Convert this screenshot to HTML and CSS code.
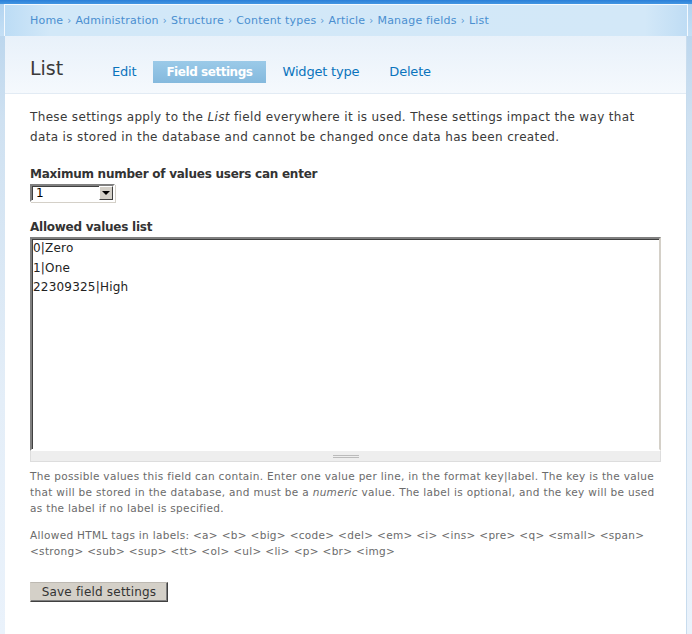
FILE: index.html
```html
<!DOCTYPE html>
<html>
<head>
<meta charset="utf-8">
<title>List</title>
<link rel="stylesheet" href="styles.css">
</head>
<body>
<div class="topbar"></div>
<div class="crumbs-wrap">
  <div class="crumbs">
    <a href="#">Home</a><span class="sep">›</span><a href="#">Administration</a><span class="sep">›</span><a href="#">Structure</a><span class="sep">›</span><a href="#">Content types</a><span class="sep">›</span><a href="#">Article</a><span class="sep">›</span><a href="#">Manage fields</a><span class="sep">›</span><a href="#">List</a>
  </div>
</div>
<div class="page">
  <div class="page-head">
    <h1 class="title">List</h1>
    <ul class="tabs">
      <li><a href="#">Edit</a></li>
      <li class="active"><a href="#">Field settings</a></li>
      <li><a href="#">Widget type</a></li>
      <li><a href="#">Delete</a></li>
    </ul>
  </div>
  <div class="content">
    <p class="intro">These settings apply to the <em>List</em> field everywhere it is used. These settings impact the way that data is stored in the database and cannot be changed once data has been created.</p>
    <div class="form-item">
      <label class="label">Maximum number of values users can enter</label>
      <div class="select"><span class="select-val">1</span><span class="select-btn"><span class="arrow"></span></span></div>
    </div>
    <div class="form-item">
      <label class="label">Allowed values list</label>
      <div class="textarea-wrap">
        <textarea class="textarea" rows="10">0|Zero
1|One
22309325|High</textarea>
        <div class="grip"><span class="grip-lines"></span></div>
      </div>
      <div class="desc">The possible values this field can contain. Enter one value per line, in the format key|label. The key is the value that will be stored in the database, and must be a <em>numeric</em> value. The label is optional, and the key will be used as the label if no label is specified.</div>
      <div class="desc desc2">Allowed HTML tags in labels: &lt;a&gt; &lt;b&gt; &lt;big&gt; &lt;code&gt; &lt;del&gt; &lt;em&gt; &lt;i&gt; &lt;ins&gt; &lt;pre&gt; &lt;q&gt; &lt;small&gt; &lt;span&gt; &lt;strong&gt; &lt;sub&gt; &lt;sup&gt; &lt;tt&gt; &lt;ol&gt; &lt;ul&gt; &lt;li&gt; &lt;p&gt; &lt;br&gt; &lt;img&gt;</div>
    </div>
    <div class="actions">
      <button class="button" type="button">Save field settings</button>
    </div>
  </div>
</div>
</body>
</html>
```

FILE: styles.css
```css
html, body {
  margin: 0;
  padding: 0;
}
body {
  font-family: "DejaVu Sans", Verdana, sans-serif;
  color: #333;
  background: linear-gradient(to bottom, #b4d2ec 0px, #cfe1f1 120px, #e4eef8 400px, #eaf2fb 634px);
  height: 634px;
  overflow: hidden;
}
.topbar {
  height: 4px;
  background: linear-gradient(to bottom, #2a7fd8, #4396e2);
}
.crumbs-wrap {
  background: linear-gradient(to bottom, #b3d4f0, #c4dff5);
  padding: 0 4px;
}
.crumbs {
  height: 31px;
  border: 1px solid #f4f9fe;
  border-bottom: 0;
  background: linear-gradient(to right, #bcdcf5 0px, #d2e8f8 45px, #d3e8f8 640px, #bedcf4 684px);
  padding-left: 25px;
  font-size: 11px;
  line-height: 32px;
  color: #4a8fd0;
  letter-spacing: 0.2px;
}
.crumbs a {
  color: #4a8fd0;
  text-decoration: none;
}
.crumbs .sep {
  display: inline-block;
  margin: 0 4px;
  font-size: 10px;
  color: #5a98d2;
}
.page {
  margin: 0 5px 0 5px;
  background: #fff;
  height: 598px;
  border-right: 1px solid #c8dcee;
}
.page-head {
  display: flex;
  align-items: center;
  height: 57px;
  padding-left: 25px;
  background: linear-gradient(to bottom, #e8f1fa, #f5f9fd);
  border-bottom: 1px solid #e2ebf4;
}
.title {
  margin: 0;
  width: 69px;
  font-size: 19px;
  font-weight: normal;
  color: #3a3a3a;
  position: relative;
  top: 3px;
}
.tabs {
  display: flex;
  list-style: none;
  margin: 0;
  padding: 0;
  gap: 4px;
  position: relative;
  top: 7px;
}
.tabs li a {
  display: block;
  padding: 0 13px;
  height: 22px;
  line-height: 22px;
  font-size: 13px;
  color: #0a74bd;
  text-decoration: none;
  letter-spacing: -0.2px;
}
.tabs li.active a {
  background: linear-gradient(to bottom, #9bcae8, #84b9dd);
  color: #fff;
  font-weight: bold;
  font-size: 12px;
  letter-spacing: -0.45px;
}
.content {
  padding: 13px 26px 0 25px;
}
.intro {
  margin: 0;
  font-size: 12px;
  line-height: 20px;
  color: #3a3a3a;
  letter-spacing: 0.35px;
}
.form-item {
  margin-top: 19px;
}
.label {
  display: block;
  font-size: 12px;
  font-weight: bold;
  line-height: 16px;
  color: #333;
  margin-bottom: 2px;
  letter-spacing: -0.25px;
}
.select {
  display: flex;
  width: 85px;
  height: 18px;
  box-sizing: border-box;
  border: 2px solid;
  border-color: #808080 #ffffff #ffffff #808080;
  box-shadow: inset 1px 1px 0 #404040, 1px 1px 0 #d4d0c8;
  background: #fff;
  align-items: center;
  justify-content: space-between;
}
.select-val {
  font-size: 12px;
  padding-left: 4px;
  color: #000;
  line-height: 14px;
}
.select-btn {
  width: 14px;
  height: 14px;
  box-sizing: border-box;
  background: #d4d0c8;
  border: 1px solid;
  border-color: #fff #404040 #404040 #fff;
  display: flex;
  align-items: center;
  justify-content: center;
}
.arrow {
  width: 0;
  height: 0;
  border-left: 4px solid transparent;
  border-right: 4px solid transparent;
  border-top: 4px solid #000;
}
.form-item + .form-item {
  margin-top: 17px;
}
.textarea-wrap {
  width: 631px;
}
.textarea {
  display: block;
  width: 631px;
  height: 214px;
  box-sizing: border-box;
  margin: 0;
  padding: 0 1px;
  border: 2px solid;
  border-color: #808080 #d4d0c8 #ffffff #808080;
  box-shadow: inset 1px 1px 0 #404040;
  font-family: "DejaVu Sans", Verdana, sans-serif;
  font-size: 12px;
  line-height: 19.5px;
  color: #222;
  letter-spacing: 0.2px;
  resize: none;
  outline: none;
  overflow: hidden;
}
.grip {
  height: 10px;
  background: #eeeeee;
  border: 1px solid #dddddd;
  border-top: 0;
  display: flex;
  justify-content: center;
  align-items: center;
}
.grip-lines {
  display: block;
  width: 26px;
  height: 3px;
  border-top: 1px solid #bbb;
  border-bottom: 1px solid #bbb;
  box-sizing: border-box;
}
.desc {
  margin-top: 6px;
  font-size: 10.5px;
  line-height: 16px;
  color: #6b6b6b;
  letter-spacing: 0.32px;
}
.desc2 {
  margin-top: 11px;
}
.actions {
  margin-top: 23px;
}
.button {
  display: block;
  margin: 0;
  width: 138px;
  height: 20px;
  padding: 0;
  box-sizing: border-box;
  background: #d4d0c8;
  border: 1px solid;
  border-color: #bdb9b2 #404040 #404040 #d4d0c8;
  box-shadow: inset -1px -1px 0 #808080;
  font-family: "DejaVu Sans", Verdana, sans-serif;
  font-size: 12px;
  color: #333;
  line-height: 18px;
  letter-spacing: 0.2px;
}
```
